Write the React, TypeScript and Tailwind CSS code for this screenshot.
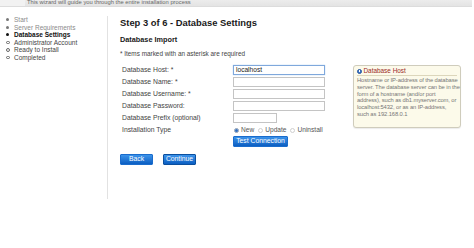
import React from "react";

const steps = [
  { label: "Start", state: "done" },
  { label: "Server Requirements", state: "done" },
  { label: "Database Settings", state: "current" },
  { label: "Administrator Account", state: "todo" },
  { label: "Ready to Install", state: "todo" },
  { label: "Completed", state: "todo" },
];

const fields = [
  { label: "Database Host: *", value: "localhost", focus: true, w: "w-[92px]" },
  { label: "Database Name: *", value: "", w: "w-[92px]" },
  { label: "Database Username: *", value: "", w: "w-[92px]" },
  { label: "Database Password:", value: "", w: "w-[92px]" },
  { label: "Database Prefix (optional)", value: "", w: "w-[44px]" },
];

const helpLines = [
  "Hostname or IP-address of the database",
  "server. The database server can be in the",
  "form of a hostname (and/or port",
  "address), such as db1.myserver.com, or",
  "localhost:5432, or as an IP-address,",
  "such as 192.168.0.1",
];

function Radio({ checked }: { checked?: boolean }) {
  return checked ? (
    <span className="inline-flex w-[5px] h-[5px] rounded-full border border-[#8a9bb0] bg-white items-center justify-center">
      <span className="w-[3px] h-[3px] rounded-full bg-[#2f6cc0]" />
    </span>
  ) : (
    <span className="inline-block w-[5px] h-[5px] rounded-full bg-white border border-[#cfcfcf]" />
  );
}

function BlueButton({ children, w, focus }: { children: React.ReactNode; w: string; focus?: boolean }) {
  return (
    <div
      className={`${w} h-[11px] flex items-center justify-center rounded-[1px] bg-gradient-to-b from-[#3b93ea] to-[#0a5ec2] text-white text-[6.8px] leading-none border ${
        focus ? "border-[#0b4f9e]" : "border-[#1a6ccc]"
      }`}
    >
      {children}
    </div>
  );
}

export default function App() {
  return (
    <div
      className="w-[474px] h-[248px] bg-white overflow-hidden text-[#333]"
      style={{ fontFamily: '"Liberation Sans", Arial, sans-serif' }}
    >
      {/* top bar */}
      <div className="h-[7px] w-[472px] flex overflow-hidden bg-gradient-to-b from-[#ececec] to-[#e4e4e4] border-b border-[#dcdcdc]">
        <div className="w-[25px] h-full bg-[#f2f2f2]" />
        <div className="ml-[2px] -mt-[2px] text-[5.8px] leading-[8px] text-[#666] whitespace-nowrap">
          This wizard will guide you through the entire installation process
        </div>
      </div>

      <div className="flex mt-[9px]">
        {/* sidebar */}
        <div className="w-[107px] shrink-0 pl-[6px]">
          {steps.map((s) => (
            <div key={s.label} className="flex items-center h-[7.5px]">
              <span className="w-[8px] flex items-center">
                {s.state === "todo" ? (
                  <span className="inline-block w-[3.5px] h-[3.5px] rounded-full border border-[#666]" />
                ) : (
                  <span
                    className={`inline-block w-[3px] h-[3px] rounded-full ${
                      s.state === "current" ? "bg-[#111]" : "bg-[#777]"
                    }`}
                  />
                )}
              </span>
              <span
                className={`text-[6.5px] leading-[7.5px] whitespace-nowrap ${
                  s.state === "current"
                    ? "font-bold text-[#111]"
                    : s.state === "done"
                    ? "text-[#8a8a8a]"
                    : "text-[#444]"
                }`}
              >
                {s.label}
              </span>
            </div>
          ))}
        </div>

        {/* content */}
        <div className="h-[183px] border-l border-[#e2e2e2] pl-[12px] pt-[1px] flex-1">
          <div className="text-[9.4px] leading-[12px] font-bold text-[#1a1a1a] whitespace-nowrap">
            Step 3 of 6 - Database Settings
          </div>
          <div className="mt-[6px] text-[7.3px] leading-[9px] font-bold text-[#1a1a1a]">Database Import</div>
          <div className="mt-[6px] text-[6.4px] leading-[8px] text-[#444] whitespace-nowrap">
            * Items marked with an asterisk are required
          </div>

          <div className="mt-[7px] flex">
            {/* form */}
            <div className="w-[213px] shrink-0">
              <div className="pl-[2px] flex flex-col gap-[2px]">
                {fields.map((f) => (
                  <div key={f.label} className="flex items-center h-[10px]">
                    <div className="w-[111px] text-[6.8px] leading-none text-[#444] whitespace-nowrap">{f.label}</div>
                    <div
                      className={`${f.w} h-[10px] border ${
                        f.focus ? "border-[#7fa8dc] shadow-[0_0_1px_#9cc0ee]" : "border-[#c4c4c4]"
                      } bg-white flex items-center pl-[2px] text-[6.6px] leading-none text-[#222]`}
                    >
                      {f.value}
                    </div>
                  </div>
                ))}
                <div className="flex items-center h-[10px]">
                  <div className="w-[111px] text-[6.8px] leading-none text-[#444]">Installation Type</div>
                  <div className="flex items-center text-[6.6px] leading-none text-[#555] pl-[1px]">
                    <Radio checked />
                    <span className="ml-[2px]">New</span>
                    <span className="ml-[4px]" />
                    <Radio />
                    <span className="ml-[2px]">Update</span>
                    <span className="ml-[4px]" />
                    <Radio />
                    <span className="ml-[2px]">Uninstall</span>
                  </div>
                </div>
              </div>
              <div className="mt-[1px] ml-[113px]">
                <BlueButton w="w-[55px]">Test Connection</BlueButton>
              </div>
              <div className="mt-[7px] flex gap-[10px]">
                <BlueButton w="w-[33px]">Back</BlueButton>
                <BlueButton w="w-[33px]" focus>
                  Continue
                </BlueButton>
              </div>
            </div>

            {/* help box */}
            <div className="ml-[20px] w-[108px] h-[63px] shrink-0 rounded-[3px] border border-[#cfccbc] bg-[#fcfaea] shadow-[0_1px_1px_rgba(0,0,0,0.08)] px-[3px]">
              <div className="flex items-center h-[9px] mt-[1px] border-b border-[#dcd6bb]">
                <span className="w-[5px] h-[5px] rounded-full bg-[#3d73c4] border border-[#2a5aa0] flex items-center justify-center">
                  <span className="w-[1px] h-[2px] bg-white" />
                </span>
                <span className="ml-[1.5px] text-[6.4px] leading-none text-[#9b2b1f]">Database Host</span>
              </div>
              <div className="mt-[1px] text-[5.8px] leading-[6.8px] text-[#777] tracking-[-0.1px]">
                {helpLines.map((l) => (
                  <div key={l} className="whitespace-nowrap">
                    {l}
                  </div>
                ))}
              </div>
            </div>
          </div>
        </div>
      </div>
    </div>
  );
}
